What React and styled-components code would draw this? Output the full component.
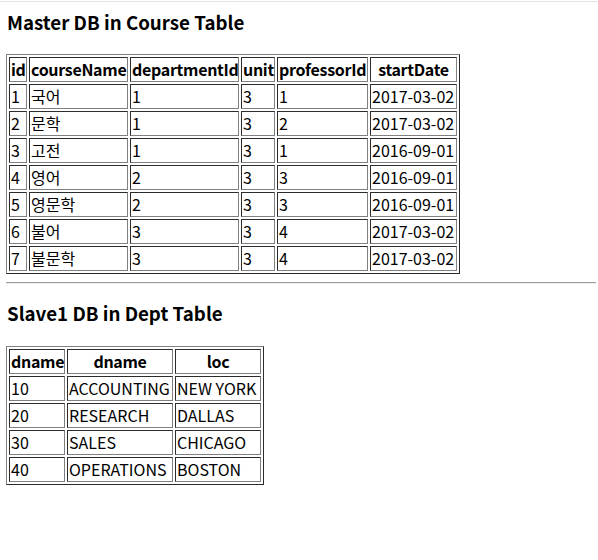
import React from "react";
import styled, { createGlobalStyle } from "styled-components";

const GlobalStyle = createGlobalStyle`
  body {
    margin: 0;
    background: #fff;
    color: #000;
    font-family: "Noto Sans CJK KR", "Malgun Gothic", sans-serif;
  }
`;

const TopLine = styled.div`
  margin-top: 1px;
  height: 1px;
  background: #e2e2e2;
`;

const Page = styled.div`
  padding: 0 2px 0 6px;
`;

const Title = styled.h3`
  margin: ${(p) => p.$top}px 0 ${(p) => p.$bottom}px 1px;
  font-size: 18.72px;
  line-height: 24px;
  font-weight: bold;
`;

const Rule = styled.hr`
  margin: 8px 0 0;
  height: 0;
  border: none;
  border-top: 1px solid #9c9c9c;
  border-bottom: 1px solid #ececec;
`;

const Table = styled.table`
  table-layout: fixed;
  width: ${(p) => p.$width}px;
  border-collapse: separate;
  border-spacing: 2px;
  border: 1px outset grey;
  font-size: 16px;
  line-height: 21px;
`;

const Th = styled.th`
  width: ${(p) => p.$w}px;
  padding: 1px;
  border: 1px inset grey;
  font-weight: bold;
  letter-spacing: -0.3px;
  text-align: center;
  white-space: nowrap;
`;

const Td = styled.td`
  padding: 1px;
  border: 1px inset grey;
  text-align: left;
  white-space: nowrap;
`;

const courses = [
  [1, "국어", 1, 3, 1, "2017-03-02"],
  [2, "문학", 1, 3, 2, "2017-03-02"],
  [3, "고전", 1, 3, 1, "2016-09-01"],
  [4, "영어", 2, 3, 3, "2016-09-01"],
  [5, "영문학", 2, 3, 3, "2016-09-01"],
  [6, "불어", 3, 3, 4, "2017-03-02"],
  [7, "불문학", 3, 3, 4, "2017-03-02"],
];

const courseCols = [
  ["id", 14],
  ["courseName", 95],
  ["departmentId", 105],
  ["unit", 30],
  ["professorId", 87],
  ["startDate", 83],
];

const depts = [
  [10, "ACCOUNTING", "NEW YORK"],
  [20, "RESEARCH", "DALLAS"],
  [30, "SALES", "CHICAGO"],
  [40, "OPERATIONS", "BOSTON"],
];

const deptCols = [
  ["dname", 52],
  ["dname", 102],
  ["loc", 82],
];

const DataTable = ({ cols, rows, width }) => (
  <Table $width={width}>
    <tbody>
      <tr>
        {cols.map(([name, w], i) => (
          <Th key={i} $w={w}>{name}</Th>
        ))}
      </tr>
      {rows.map((row, r) => (
        <tr key={r}>
          {row.map((v, c) => (
            <Td key={c}>{v}</Td>
          ))}
        </tr>
      ))}
    </tbody>
  </Table>
);

const App = () => (
  <>
    <GlobalStyle />
    <TopLine />
    <Page>
      <Title $top={8} $bottom={20}>Master DB in Course Table</Title>
      <DataTable cols={courseCols} rows={courses} width={454} />
      <Rule />
      <Title $top={17} $bottom={21}>Slave1 DB in Dept Table</Title>
      <DataTable cols={deptCols} rows={depts} width={258} />
    </Page>
  </>
);

export default App;
